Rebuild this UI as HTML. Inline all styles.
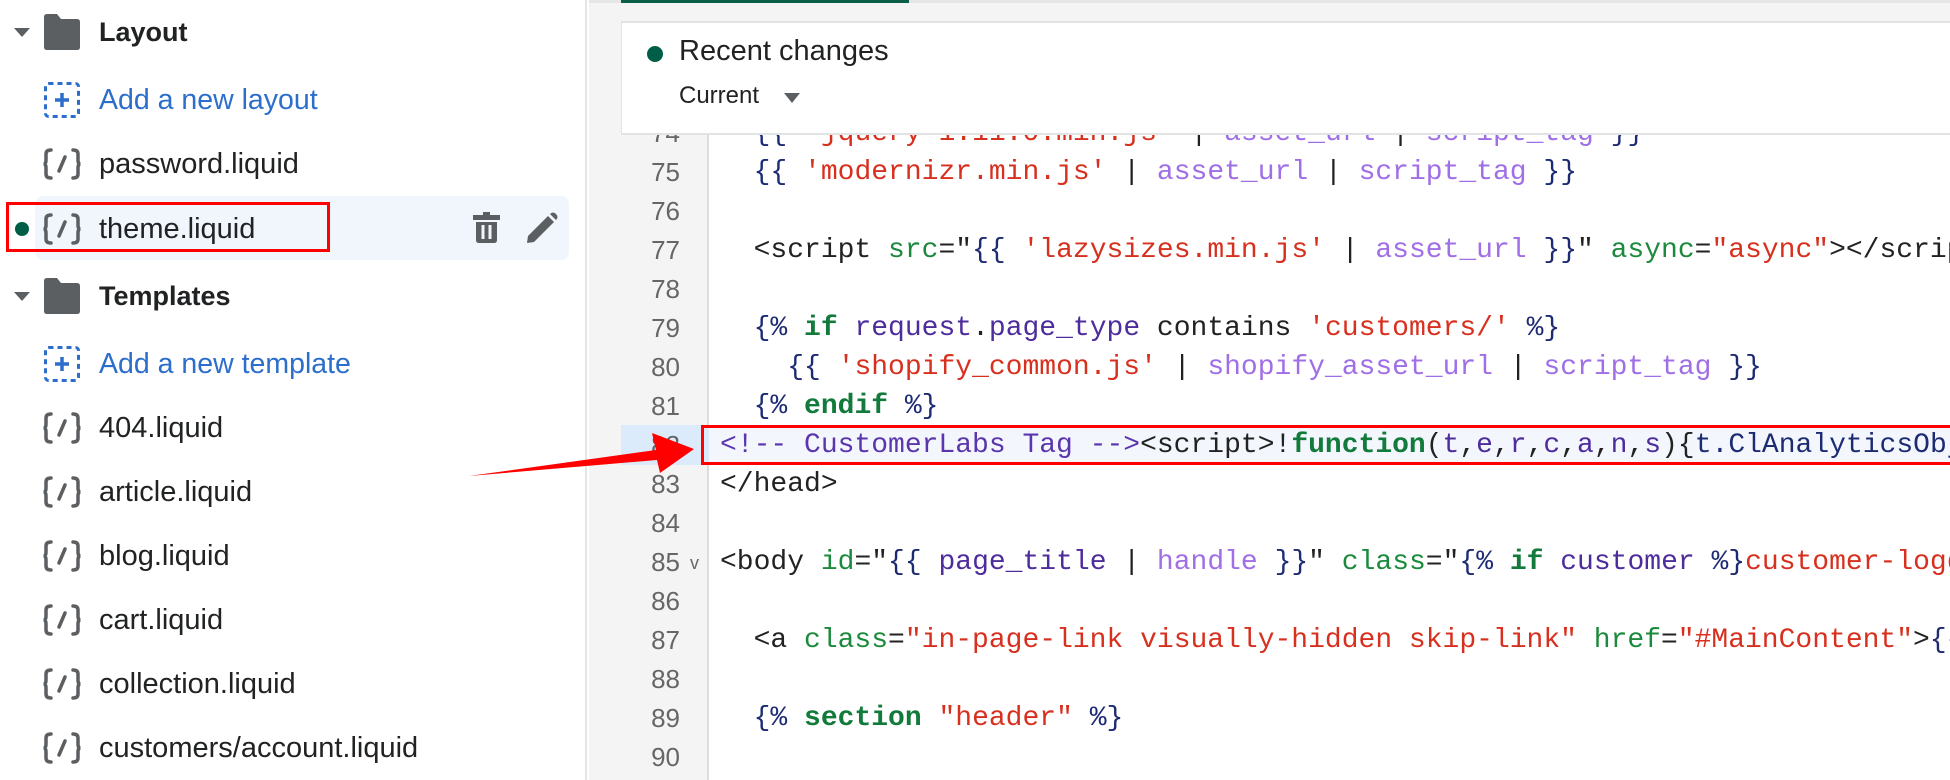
<!DOCTYPE html>
<html style="width:1950px;height:780px;overflow:hidden"><head><meta charset="utf-8"><style>
*{margin:0;padding:0;box-sizing:border-box}
body{width:1950px;height:780px;overflow:hidden;background:#fff;font-family:"Liberation Sans",sans-serif;position:relative}
.side{position:absolute;left:0;top:0;width:587px;height:780px;background:#fff;border-right:2px solid #e3e5e7}
.row{position:absolute;left:0;height:40px;width:587px}
.lbl{position:absolute;left:99px;font-size:29px;color:#202223;line-height:40px;top:0;white-space:nowrap}
.lbl.b{font-weight:bold;font-size:27px}
.lbl.a{color:#2c6ecb;font-size:28.5px}
.ico{position:absolute;left:42px;top:4px}
.right{position:absolute;left:589px;top:0;width:1361px;height:780px;background:#f4f4f4}
.card{position:absolute;left:621px;top:21px;width:1329px;height:759px;background:#fff;border-top:2px solid #e1e3e5;border-left:1px solid #e1e3e5}
.gut{position:absolute;left:621px;top:135px;width:88px;height:645px;background:#f4f4f4;border-right:2px solid #dcdcdc}
.code{position:absolute;left:709px;top:135px;width:1241px;height:645px;overflow:hidden}
.ln{position:absolute;left:621px;width:59px;text-align:right;font-family:"Liberation Sans",sans-serif;font-size:26px;color:#666;height:39px;line-height:39px}
.cl{position:absolute;left:11px;white-space:pre;font-family:"Liberation Mono",monospace;font-size:28px;height:39px;line-height:39px;color:#222}
.s{color:#d7301f}.f{color:#a06ee6}.n{color:#1d2b73}.k{color:#127a3a;font-weight:bold}.at{color:#1c8a3c}.v{color:#4d2c9c}.c{color:#5b35ad}
.hdr{position:absolute;left:622px;top:23px;width:1328px;height:112px;background:#fff;border-bottom:2px solid #e1e3e5;z-index:3}
</style></head><body>
<div class="side">
  <div class="row" style="top:12px">
    <svg style="position:absolute;left:14px;top:16px" width="16" height="9"><path d="M0 0H16L8 9Z" fill="#5c5f62"/></svg>
    <svg style="position:absolute;left:44px;top:2px" width="36" height="36"><path d="M3 0H13L17 5H33Q36 5 36 8V33Q36 36 33 36H3Q0 36 0 33V3Q0 0 3 0Z" fill="#5c5f62"/></svg>
    <div class="lbl b">Layout</div>
  </div>
  <div class="row" style="top:80px">
    <svg style="position:absolute;left:44px;top:2px" width="36" height="36"><rect x="1.5" y="1.5" width="33" height="33" rx="3" fill="none" stroke="#2c6ecb" stroke-width="3" stroke-dasharray="5 4"/><path d="M18 11V25M11 18H25" stroke="#2c6ecb" stroke-width="3.5"/></svg>
    <div class="lbl a">Add a new layout</div>
  </div>
  <div class="row" style="top:144px">
    <svg class="ico" width="40" height="32"><g fill="none" stroke="#5c5f62" stroke-width="3.5" stroke-linecap="round"><path d="M9 2Q4 2 4 6V12Q4 16 1.5 16Q4 16 4 20V26Q4 30 9 30"/><path d="M31 2Q36 2 36 6V12Q36 16 38.5 16Q36 16 36 20V26Q36 30 31 30"/><path d="M23 9L17 23"/></g></svg>
    <div class="lbl">password.liquid</div>
  </div>
  <div style="position:absolute;left:35px;top:196px;width:534px;height:64px;background:#f1f6fd;border-radius:8px"></div>
  <div class="row" style="top:209px">
    <div style="position:absolute;left:15px;top:13px;width:14px;height:14px;border-radius:50%;background:#005e46"></div>
    <svg class="ico" width="40" height="32"><g fill="none" stroke="#5c5f62" stroke-width="3.5" stroke-linecap="round"><path d="M9 2Q4 2 4 6V12Q4 16 1.5 16Q4 16 4 20V26Q4 30 9 30"/><path d="M31 2Q36 2 36 6V12Q36 16 38.5 16Q36 16 36 20V26Q36 30 31 30"/><path d="M23 9L17 23"/></g></svg>
    <div class="lbl">theme.liquid</div>
    <svg style="position:absolute;left:472px;top:3px" width="29" height="31"><path d="M11 0H18V3H28V8H1V3H11Z" fill="#5c5f62"/><path d="M4 10H25V28Q25 31 22 31H7Q4 31 4 28Z" fill="#5c5f62"/><path d="M11 13V27M18 13V27" stroke="#f1f6fd" stroke-width="3"/></svg>
    <svg style="position:absolute;left:526px;top:3px" width="32" height="32"><path d="M2 24L22 4L28 10L8 30L1 31Z" fill="#5c5f62"/><path d="M24 2Q27 -1 30 2L30 2Q33 5 30 8Z" fill="#5c5f62"/></svg>
  </div>
  <div style="position:absolute;left:6px;top:202px;width:324px;height:50px;border:3.5px solid #f00"></div>
  <div class="row" style="top:276px">
    <svg style="position:absolute;left:14px;top:16px" width="16" height="9"><path d="M0 0H16L8 9Z" fill="#5c5f62"/></svg>
    <svg style="position:absolute;left:44px;top:2px" width="36" height="36"><path d="M3 0H13L17 5H33Q36 5 36 8V33Q36 36 33 36H3Q0 36 0 33V3Q0 0 3 0Z" fill="#5c5f62"/></svg>
    <div class="lbl b">Templates</div>
  </div>
  <div class="row" style="top:344px">
    <svg style="position:absolute;left:44px;top:2px" width="36" height="36"><rect x="1.5" y="1.5" width="33" height="33" rx="3" fill="none" stroke="#2c6ecb" stroke-width="3" stroke-dasharray="5 4"/><path d="M18 11V25M11 18H25" stroke="#2c6ecb" stroke-width="3.5"/></svg>
    <div class="lbl a">Add a new template</div>
  </div>
  <div class="row" style="top:408px"><svg class="ico" width="40" height="32"><g fill="none" stroke="#5c5f62" stroke-width="3.5" stroke-linecap="round"><path d="M9 2Q4 2 4 6V12Q4 16 1.5 16Q4 16 4 20V26Q4 30 9 30"/><path d="M31 2Q36 2 36 6V12Q36 16 38.5 16Q36 16 36 20V26Q36 30 31 30"/><path d="M23 9L17 23"/></g></svg><div class="lbl">404.liquid</div></div>
  <div class="row" style="top:472px"><svg class="ico" width="40" height="32"><g fill="none" stroke="#5c5f62" stroke-width="3.5" stroke-linecap="round"><path d="M9 2Q4 2 4 6V12Q4 16 1.5 16Q4 16 4 20V26Q4 30 9 30"/><path d="M31 2Q36 2 36 6V12Q36 16 38.5 16Q36 16 36 20V26Q36 30 31 30"/><path d="M23 9L17 23"/></g></svg><div class="lbl">article.liquid</div></div>
  <div class="row" style="top:536px"><svg class="ico" width="40" height="32"><g fill="none" stroke="#5c5f62" stroke-width="3.5" stroke-linecap="round"><path d="M9 2Q4 2 4 6V12Q4 16 1.5 16Q4 16 4 20V26Q4 30 9 30"/><path d="M31 2Q36 2 36 6V12Q36 16 38.5 16Q36 16 36 20V26Q36 30 31 30"/><path d="M23 9L17 23"/></g></svg><div class="lbl">blog.liquid</div></div>
  <div class="row" style="top:600px"><svg class="ico" width="40" height="32"><g fill="none" stroke="#5c5f62" stroke-width="3.5" stroke-linecap="round"><path d="M9 2Q4 2 4 6V12Q4 16 1.5 16Q4 16 4 20V26Q4 30 9 30"/><path d="M31 2Q36 2 36 6V12Q36 16 38.5 16Q36 16 36 20V26Q36 30 31 30"/><path d="M23 9L17 23"/></g></svg><div class="lbl">cart.liquid</div></div>
  <div class="row" style="top:664px"><svg class="ico" width="40" height="32"><g fill="none" stroke="#5c5f62" stroke-width="3.5" stroke-linecap="round"><path d="M9 2Q4 2 4 6V12Q4 16 1.5 16Q4 16 4 20V26Q4 30 9 30"/><path d="M31 2Q36 2 36 6V12Q36 16 38.5 16Q36 16 36 20V26Q36 30 31 30"/><path d="M23 9L17 23"/></g></svg><div class="lbl">collection.liquid</div></div>
  <div class="row" style="top:728px"><svg class="ico" width="40" height="32"><g fill="none" stroke="#5c5f62" stroke-width="3.5" stroke-linecap="round"><path d="M9 2Q4 2 4 6V12Q4 16 1.5 16Q4 16 4 20V26Q4 30 9 30"/><path d="M31 2Q36 2 36 6V12Q36 16 38.5 16Q36 16 36 20V26Q36 30 31 30"/><path d="M23 9L17 23"/></g></svg><div class="lbl">customers/account.liquid</div></div>
</div>

<div class="right"></div>
<div style="position:absolute;left:589px;top:0;width:1361px;height:3px;background:#e6e6e6"></div>
<div style="position:absolute;left:621px;top:0;width:288px;height:3px;background:#0b5e45"></div>
<div class="card"></div>
<div class="hdr">
  <div style="position:absolute;left:25px;top:23px;width:16px;height:16px;border-radius:50%;background:#005e46"></div>
  <div style="position:absolute;left:57px;top:12px;font-size:29px;color:#202223">Recent changes</div>
  <div style="position:absolute;left:57px;top:59px;font-size:24px;color:#202223">Current</div>
  <svg style="position:absolute;left:162px;top:70px" width="16" height="10"><path d="M0 0H16L8 10Z" fill="#5c5f62"/></svg>
</div>
<div class="gut"></div>
<div style="position:absolute;left:621px;top:425px;width:88px;height:40px;background:#dcebfc"></div>
<div class="ln" style="top:114px">74</div>
<div class="ln" style="top:153px">75</div>
<div class="ln" style="top:192px">76</div>
<div class="ln" style="top:231px">77</div>
<div class="ln" style="top:270px">78</div>
<div class="ln" style="top:309px">79</div>
<div class="ln" style="top:348px">80</div>
<div class="ln" style="top:387px">81</div>
<div class="ln" style="top:426px">82</div>
<div class="ln" style="top:465px">83</div>
<div class="ln" style="top:504px">84</div>
<div class="ln" style="top:543px">85</div>
<div style="position:absolute;left:690px;top:553px;font-size:18px;color:#666">v</div>
<div class="ln" style="top:582px">86</div>
<div class="ln" style="top:621px">87</div>
<div class="ln" style="top:660px">88</div>
<div class="ln" style="top:699px">89</div>
<div class="ln" style="top:738px">90</div>
<div class="code">
<div style="position:absolute;left:0;top:290px;width:1241px;height:40px;background:#f3f7fd"></div>
<div class="cl" style="top:-21px">  <span class="n">{{</span> <span class="s">'jquery-1.11.0.min.js'</span> | <span class="f">asset_url</span> | <span class="f">script_tag</span> <span class="n">}}</span></div>
<div class="cl" style="top:18px">  <span class="n">{{</span> <span class="s">'modernizr.min.js'</span> | <span class="f">asset_url</span> | <span class="f">script_tag</span> <span class="n">}}</span></div>
<div class="cl" style="top:96px">  &lt;script <span class="at">src</span>="<span class="n">{{</span> <span class="s">'lazysizes.min.js'</span> | <span class="f">asset_url</span> <span class="n">}}</span>" <span class="at">async</span>=<span class="s">"async"</span>&gt;&lt;/script&gt;</div>
<div class="cl" style="top:174px">  <span class="n">{%</span> <span class="k">if</span> <span class="v">request</span>.<span class="v">page_type</span> contains <span class="s">'customers/'</span> <span class="n">%}</span></div>
<div class="cl" style="top:213px">    <span class="n">{{</span> <span class="s">'shopify_common.js'</span> | <span class="f">shopify_asset_url</span> | <span class="f">script_tag</span> <span class="n">}}</span></div>
<div class="cl" style="top:252px">  <span class="n">{%</span> <span class="k">endif</span> <span class="n">%}</span></div>
<div class="cl" style="top:291px"><span class="c">&lt;!-- CustomerLabs Tag --&gt;</span>&lt;script&gt;!<span class="k">function</span>(<span class="v">t</span>,<span class="v">e</span>,<span class="v">r</span>,<span class="v">c</span>,<span class="v">a</span>,<span class="v">n</span>,<span class="v">s</span>){<span class="n">t.ClAnalyticsObject</span></div>
<div class="cl" style="top:330px">&lt;/head&gt;</div>
<div class="cl" style="top:408px">&lt;body <span class="at">id</span>="<span class="n">{{</span> <span class="v">page_title</span> | <span class="f">handle</span> <span class="n">}}</span>" <span class="at">class</span>="<span class="n">{%</span> <span class="k">if</span> <span class="v">customer</span> <span class="n">%}</span><span class="s">customer-logged-in</span></div>
<div class="cl" style="top:486px">  &lt;a <span class="at">class</span>=<span class="s">"in-page-link visually-hidden skip-link"</span> <span class="at">href</span>=<span class="s">"#MainContent"</span>&gt;<span class="n">{{</span></div>
<div class="cl" style="top:564px">  <span class="n">{%</span> <span class="k">section</span> <span class="s">"header"</span> <span class="n">%}</span></div>
</div>
<div style="position:absolute;left:701px;top:425px;width:1249px;height:40px;border:3.5px solid #f00;border-right:none"></div>
<svg style="position:absolute;left:0;top:0" width="1950" height="780"><path d="M469 476L656 450L652 433L694 449L660 473L657 460Z" fill="#f00"/></svg>
</body></html>
